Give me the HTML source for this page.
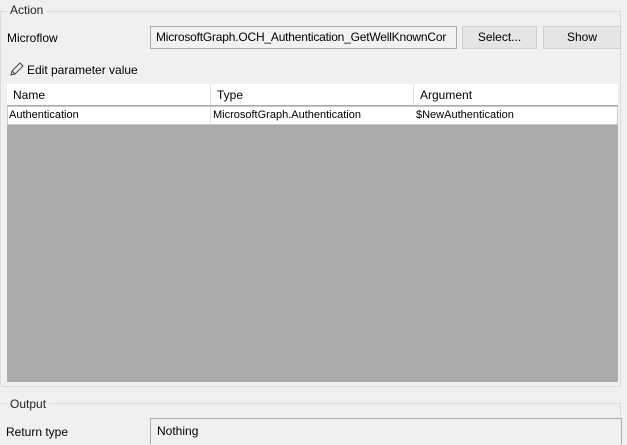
<!DOCTYPE html><html><head><style>
body{margin:0;width:627px;height:444px;background:#f0f0f0;font-family:"Liberation Sans",sans-serif;font-size:12px;color:#000;position:relative;overflow:hidden}
.a{position:absolute}
</style></head><body>
<div class="a" style="left:1px;top:11px;width:619px;height:374px;border:1px solid #dcdcdc;border-left:none;"></div>
<div class="a" style="left:0;top:11px;width:1px;height:374px;background:#dcdcdc"></div>
<div class="a" style="left:7px;top:3px;background:#f0f0f0;padding:0 3px;color:#222">Action</div>
<div class="a" style="left:7px;top:31px">Microflow</div>
<div class="a" style="left:150px;top:26px;width:300px;height:21px;border:1px solid #aaa;background:#f2f2f2;line-height:21px;padding-left:5px;overflow:hidden;white-space:nowrap;font-size:12px;letter-spacing:-0.2px">MicrosoftGraph.OCH_Authentication_GetWellKnownCor</div>
<div class="a" style="left:462px;top:26px;width:73px;height:21px;border:1px solid #cfcfcf;background:#e5e5e5;text-align:center;line-height:21px">Select...</div>
<div class="a" style="left:543px;top:26px;width:76px;height:21px;border:1px solid #cfcfcf;background:#e5e5e5;text-align:center;line-height:21px">Show</div>
<svg class="a" style="left:10px;top:62px" width="14" height="14"><path d="M1 13 L2 9 L10 1 L13 4 L5 12 Z M2 9 L5 12" fill="none" stroke="#444" stroke-width="1"/></svg>
<div class="a" style="left:27px;top:63px">Edit parameter value</div>
<div class="a" style="left:7px;top:84px;width:611px;height:298px;background:#ababab"></div>
<div class="a" style="left:7px;top:84px;width:611px;height:21px;background:#fff"></div>
<div class="a" style="left:210px;top:84px;width:1px;height:21px;background:#e4e4e4"></div>
<div class="a" style="left:413px;top:84px;width:1px;height:21px;background:#e4e4e4"></div>
<div class="a" style="left:13px;top:88px">Name</div>
<div class="a" style="left:217px;top:88px">Type</div>
<div class="a" style="left:420px;top:88px">Argument</div>
<div class="a" style="left:7px;top:106px;width:609px;height:17px;background:#fff;border:1px solid #c8c8c8"></div>
<div class="a" style="left:210px;top:107px;width:1px;height:17px;background:#e4e4e4"></div>
<div class="a" style="left:9px;top:109px;font-size:11px">Authentication</div>
<div class="a" style="left:213px;top:109px;font-size:11px">MicrosoftGraph.Authentication</div>
<div class="a" style="left:416px;top:109px;font-size:11px">$NewAuthentication</div>
<div class="a" style="left:0;top:403px;width:620px;height:41px;border-top:1px solid #dcdcdc;border-right:1px solid #dcdcdc"></div>
<div class="a" style="left:7px;top:397px;background:#f0f0f0;padding:0 3px;color:#222">Output</div>
<div class="a" style="left:6px;top:425px">Return type</div>
<div class="a" style="left:150px;top:418px;width:464px;height:25px;border:1px solid #aaa;border-bottom:none;background:#f0f0f0;line-height:24px;padding-left:6px">Nothing</div>
</body></html>
